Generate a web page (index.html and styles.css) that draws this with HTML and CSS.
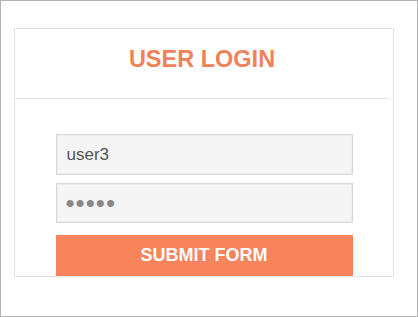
FILE: index.html
```html
<!DOCTYPE html>
<html>
<head>
<meta charset="utf-8">
<link rel="stylesheet" href="styles.css">
</head>
<body>
<div class="frame">
  <div class="card">
    <div class="card-header">
      <h1 class="title">USER LOGIN</h1>
    </div>
    <form class="form">
      <input class="field field-user" type="text" value="user3">
      <input class="field field-pass" type="password" value="12345">
      <button class="submit" type="button">SUBMIT FORM</button>
    </form>
  </div>
</div>
</body>
</html>
```

FILE: styles.css
```css
* { box-sizing: border-box; }
html, body { margin: 0; padding: 0; background: #fff; }
body { font-family: "Liberation Sans", Arial, sans-serif; }

.frame {
  width: 418px;
  height: 317px;
  border: 1px solid #b4b4b4;
  padding: 27px 0 0 13px;
}

.card {
  width: 380px;
  height: 249px;
  border: 1px solid #e2e2e2;
}

.card-header {
  height: 70px;
  padding-top: 17px;
  margin-right: 4px;
  border-bottom: 1px solid #e6e6e6;
}

.title {
  margin: 0;
  text-align: center;
  font-size: 23.5px;
  font-weight: bold;
  color: #f0825a;
  line-height: normal;
}

.form {
  display: flex;
  flex-direction: column;
  align-items: center;
  padding-top: 35px;
}

.field {
  width: 297px;
  height: 41px;
  margin: 0;
  border: 1px solid #d9d9d9;
  box-shadow: inset 0 0 0 1px #ececec;
  background: #f5f5f5;
  padding: 0 10px;
  font-family: "Liberation Sans", Arial, sans-serif;
  font-size: 17px;
  color: #555;
  outline: none;
}

.field-pass {
  height: 40px;
  margin-top: 8px;
  padding: 0 9px;
  color: #888;
  font-size: 26px;
  letter-spacing: 1px;
}

.submit {
  width: 297px;
  height: 41px;
  margin-top: 12px;
  margin-bottom: -1px;
  border: none;
  background: #f7845a;
  color: #fff;
  font-family: "Liberation Sans", Arial, sans-serif;
  font-size: 18px;
  font-weight: bold;
  padding: 0;
  cursor: pointer;
}
```
